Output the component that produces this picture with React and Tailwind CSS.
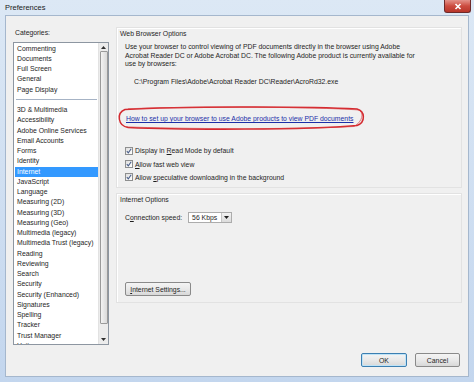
import React from "react";

const categories = [
  "Commenting", "Documents", "Full Screen", "General", "Page Display", "---",
  "3D & Multimedia", "Accessibility", "Adobe Online Services", "Email Accounts", "Forms",
  "Identity", "Internet", "JavaScript", "Language", "Measuring (2D)", "Measuring (3D)",
  "Measuring (Geo)", "Multimedia (legacy)", "Multimedia Trust (legacy)", "Reading",
  "Reviewing", "Search", "Security", "Security (Enhanced)", "Signatures", "Spelling",
  "Tracker", "Trust Manager", "Units",
];

function Check({ children }) {
  return (
    <div className="flex items-center h-[13.3px] gap-[2px]">
      <div className="w-[8px] h-[8px] border border-[#8e8f8f] bg-gradient-to-br from-[#dedede] to-white flex items-center justify-center">
        <svg width="6" height="6" viewBox="0 0 6 6">
          <path d="M0.8 3.2 L2.3 4.8 L5.2 0.8" fill="none" stroke="#4a5f8a" strokeWidth="1.1" />
        </svg>
      </div>
      <span className="text-[#1e1e1e]">{children}</span>
    </div>
  );
}

function Btn({ children, w, def }) {
  return (
    <div
      className={
        "h-[14px] rounded-[2px] border flex items-center justify-center bg-gradient-to-b from-[#f4f4f4] via-[#e9e9e9] to-[#d8d8d8] text-[#1e1e1e] " +
        (def ? "border-[#3c7fb1] shadow-[inset_0_0_0_1px_#bfe3f7]" : "border-[#8a8a8a]")
      }
      style={{ width: w }}
    >
      {children}
    </div>
  );
}

export default function App() {
  return (
    <div className="w-[474px] h-[382px] flex flex-col bg-gradient-to-b from-[#dce8f5] to-[#c3d6ee] font-['Liberation_Sans',Arial,sans-serif] text-[6.85px] leading-[9px] text-[#1e1e1e] overflow-hidden">
      {/* Title bar */}
      <div className="h-[15px] flex items-start justify-between pl-[5px] pr-[3px]">
        <span className="mt-[3px] text-[7.5px] leading-[9px] text-[#1a1a1a]">Preferences</span>
        <div className="w-[27px] h-[13px] rounded-b-[3px] border border-t-0 border-[#6d2a2a] bg-gradient-to-b from-[#e3928a] via-[#cc4b3f] to-[#b8362a] flex items-center justify-center">
          <svg width="8" height="7" viewBox="0 0 8 7">
            <path d="M1.5 1 L6.5 6 M6.5 1 L1.5 6" stroke="white" strokeWidth="1.6" />
          </svg>
        </div>
      </div>

      {/* Client area */}
      <div className="flex-1 mx-[5px] mb-[5px] bg-[#f0f0f0] border border-[#a5b7cd] flex flex-col pt-[11px] pl-[7px] pr-[6px]">
        <div className="flex gap-[7px]">
          {/* Left column */}
          <div className="flex flex-col">
            <div className="h-[15px] pl-[2px] pt-[1px]">Categories:</div>
            <div className="w-[96px] h-[303px] border border-[#8d96a1] bg-white flex overflow-hidden">
              <div className="flex-1 pt-[0.5px] pl-[1px] overflow-hidden">
                {categories.map((c, i) =>
                  c === "---" ? (
                    <div key={i} className="h-[10.25px] flex items-center pl-[1px] pr-[1px]">
                      <div className="h-px w-full bg-[#a6b3c5]" />
                    </div>
                  ) : (
                    <div
                      key={i}
                      className={
                        "h-[10.25px] leading-[10.25px] pl-[2px] whitespace-nowrap " +
                        (c === "Internet" ? "bg-[#3399ff] text-white" : "")
                      }
                    >
                      {c}
                    </div>
                  )
                )}
              </div>
              {/* scrollbar */}
              <div className="w-[10px] bg-[#ececec] border-l border-[#e2e2e2] flex flex-col items-center">
                <div className="h-[8px] flex items-center justify-center">
                  <svg width="5" height="3" viewBox="0 0 5 3"><path d="M0 3 L2.5 0 L5 3 Z" fill="#303030" /></svg>
                </div>
                <div className="w-[8px] h-[273px] rounded-[1px] border border-[#9a9a9a] bg-gradient-to-r from-[#f3f3f3] to-[#dadada]" />
                <div className="flex-1 flex items-end justify-center pb-[3px]">
                  <svg width="5" height="3" viewBox="0 0 5 3"><path d="M0 0 L2.5 3 L5 0 Z" fill="#303030" /></svg>
                </div>
              </div>
            </div>
          </div>

          {/* Right column */}
          <div className="flex-1 flex flex-col">
            {/* Web Browser Options */}
            <div className="relative h-[161px] border border-[#e2e2e2] shadow-[inset_1px_1px_0_white] pl-[3px] pt-[1px]">
              <div>Web Browser Options</div>
              <div className="pl-[5px] mt-[5px] leading-[8.7px]">
                <div>Use your browser to control viewing of PDF documents directly in the browser using Adobe</div>
                <div>Acrobat Reader DC or Adobe Acrobat DC. The following Adobe product is currently available for</div>
                <div>use by browsers:</div>
              </div>
              <div className="pl-[14px] mt-[8px]">C:\Program Files\Adobe\Acrobat Reader DC\Reader\AcroRd32.exe</div>
              <div className="pl-[6px] mt-[28px] text-[#1c2fa8] underline">
                How to set up your browser to use Adobe products to view PDF documents
              </div>
              <div className="pl-[5px] mt-[21px] flex flex-col">
                <Check>Display in <u>R</u>ead Mode by default</Check>
                <Check><u>A</u>llow fast web view</Check>
                <Check>Allow <u>s</u>peculative downloading in the background</Check>
              </div>
              {/* red annotation ellipse */}
              <svg className="absolute left-[-1px] top-[77px]" width="250" height="26" viewBox="0 0 250 26">
                <path d="M9 4.5 C 60 1.5, 190 1, 241 4 C 249 6, 250 17, 241 20.5 C 190 25, 70 25, 12 22.5 C 2 21, 0 8, 9 4.5 Z"
                  fill="none" stroke="#d42a30" strokeWidth="1.5" />
                <path d="M12 3.8 C 70 1.2, 200 1.8, 243 5 C 248 8, 247 16, 238 21.5 C 180 24.5, 60 24, 10 21.8"
                  fill="none" stroke="#d9383c" strokeWidth="0.8" opacity="0.8" />
              </svg>
            </div>

            {/* Internet Options */}
            <div className="mt-[5px] h-[110px] border border-[#e2e2e2] shadow-[inset_1px_1px_0_white] pl-[3px] pt-[1px] flex flex-col">
              <div>Internet Options</div>
              <div className="pl-[5px] mt-[8px] flex items-center gap-[6px] h-[11px]">
                <span>C<u>o</u>nnection speed:</span>
                <div className="w-[44px] h-[11px] border border-[#acacac] bg-white flex items-center justify-between">
                  <span className="pl-[3px]">56 Kbps</span>
                  <div className="w-[10px] h-full bg-gradient-to-b from-[#f2f2f2] to-[#dcdcdc] border-l border-[#c6c6c6] flex items-center justify-center">
                    <svg width="5" height="3" viewBox="0 0 5 3"><path d="M0 0 L2.5 3 L5 0 Z" fill="#202020" /></svg>
                  </div>
                </div>
              </div>
              <div className="pl-[5px] mt-[59px]">
                <Btn w="66px"><span><u>I</u>nternet Settings...</span></Btn>
              </div>
            </div>
          </div>
        </div>

        {/* Buttons */}
        <div className="mt-[8px] flex justify-end gap-[8px] pr-[2px]">
          <Btn w="46px" def>OK</Btn>
          <Btn w="45px">Cancel</Btn>
        </div>
      </div>
    </div>
  );
}
